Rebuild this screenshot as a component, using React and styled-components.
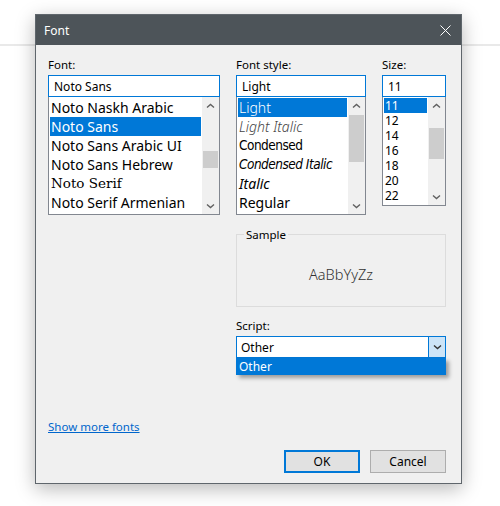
import React from "react";
import styled, { createGlobalStyle } from "styled-components";

const GlobalStyle = createGlobalStyle`
  html, body {
    margin: 0;
    background: #fff;
  }
  body {
    font-family: "Noto Sans", "Open Sans", sans-serif;
  }
`;

const Page = styled.div`
  position: relative;
  width: 500px;
  height: 506px;
  overflow: hidden;
`;

const PageHeader = styled.div`
  height: 44px;
  border-bottom: 2px solid #e9e9e9;
`;

const Dialog = styled.div`
  position: absolute;
  left: 35px;
  top: 14px;
  width: 427px;
  height: 470px;
  box-sizing: border-box;
  border: 1px solid #5f666c;
  background: #f0f0f0;
  box-shadow: 0 5px 18px rgba(0, 0, 0, 0.28);
  display: flex;
  flex-direction: column;
  font-size: 11.5px;
  color: #000;
`;

const TitleBar = styled.div`
  height: 30px;
  flex-shrink: 0;
  background: #4d5459;
  color: #fff;
  display: flex;
  align-items: center;
  justify-content: space-between;
  padding: 0 10px 0 8px;
  font-size: 12px;
`;

const Body = styled.div`
  flex: 1;
  display: flex;
  flex-direction: column;
  padding: 12px 15px 10px 12px;
`;

const Grid = styled.div`
  display: grid;
  grid-template-columns: 172px 130px 64px;
  column-gap: 16px;
  row-gap: 12px;
  align-items: start;
`;

const Field = styled.div`
  display: flex;
  flex-direction: column;
`;

const Label = styled.div`
  line-height: 16px;
  margin-bottom: 2px;
`;

const TextBox = styled.div`
  height: 22px;
  box-sizing: border-box;
  border: 1px solid #0078d7;
  background: #fff;
  padding: 0 5px;
  display: flex;
  align-items: center;
  font-size: 12px;
`;

const ListBox = styled.div`
  height: ${(p) => p.$height}px;
  box-sizing: border-box;
  border: 1px solid #828790;
  border-top: none;
  background: #fff;
  display: flex;
`;

const Items = styled.div`
  flex: 1;
  padding: 1px;
  overflow: hidden;
`;

const Item = styled.div`
  height: ${(p) => p.$row}px;
  line-height: ${(p) => p.$row}px;
  padding-left: 1px;
  white-space: nowrap;
  overflow: hidden;
  font-family: ${(p) => p.$font || '"Noto Sans", sans-serif'};
  font-size: ${(p) => p.$size || 14}px;
  font-weight: ${(p) => p.$weight || 400};
  font-style: ${(p) => (p.$italic ? "italic" : "normal")};
  font-stretch: ${(p) => (p.$narrow ? "condensed" : "normal")};
  letter-spacing: ${(p) => (p.$narrow ? "-0.5px" : "normal")};
  background: ${(p) => (p.$selected ? "#0078d7" : "transparent")};
  color: ${(p) => (p.$selected ? "#fff" : p.$color || "#000")};
`;

const ScrollBar = styled.div`
  width: 17px;
  background: #f0f0f0;
  display: flex;
  flex-direction: column;
`;

const ArrowButton = styled.div`
  height: 17px;
  display: flex;
  align-items: center;
  justify-content: center;
`;

const Track = styled.div`
  flex: 1;
`;

const Thumb = styled.div`
  margin: ${(p) => p.$offset}px 0 0 1px;
  width: 15px;
  height: ${(p) => p.$length}px;
  background: #cdcdcd;
`;

const LowerPanel = styled.div`
  grid-column: 2 / 4;
  display: flex;
  flex-direction: column;
`;

const SampleGroup = styled.fieldset`
  margin: 0;
  padding: 0;
  height: 80px;
  box-sizing: border-box;
  border: 1px solid #dcdcdc;
`;

const Legend = styled.legend`
  margin-left: 7px;
  padding: 0 2px;
  line-height: 15px;
`;

const SampleArea = styled.div`
  height: 62px;
  display: flex;
  align-items: center;
  justify-content: center;
  padding-top: 2px;
  box-sizing: border-box;
`;

const SampleText = styled.div`
  font-size: 14.5px;
  font-weight: 300;
  color: #333;
`;

const ScriptField = styled(Field)`
  margin-top: 11px;
  position: relative;
`;

const Combo = styled.div`
  height: 22px;
  box-sizing: border-box;
  border: 1px solid #0078d7;
  background: #fff;
  display: flex;
  font-size: 12px;
`;

const ComboValue = styled.div`
  flex: 1;
  padding-left: 4px;
  display: flex;
  align-items: center;
`;

const ComboButton = styled.div`
  width: 16px;
  border-left: 1px solid #0078d7;
  background: #cce4f7;
  display: flex;
  align-items: center;
  justify-content: center;
`;

const Popup = styled.div`
  position: absolute;
  left: 0;
  right: 0;
  top: 100%;
  height: 17px;
  background: #0078d7;
  color: #fff;
  padding-left: 3px;
  line-height: 17px;
  font-size: 12px;
  box-shadow: 3px 3px 4px rgba(0, 0, 0, 0.35);
`;

const Footer = styled.div`
  margin-top: auto;
  display: flex;
  flex-direction: column;
`;

const MoreLink = styled.a`
  align-self: flex-start;
  line-height: 16px;
  color: #0066cc;
  text-decoration: underline;
  margin-bottom: 15px;
  cursor: pointer;
`;

const ButtonRow = styled.div`
  display: flex;
  justify-content: flex-end;
  gap: 10px;
`;

const Button = styled.button`
  width: 76px;
  height: 23px;
  box-sizing: border-box;
  font: inherit;
  font-size: 12px;
  color: #000;
  background: #e1e1e1;
  border: ${(p) => (p.$primary ? "2px solid #0078d7" : "1px solid #adadad")};
  padding: 0;
`;

function Chevron({ down, color = "#606060" }) {
  return (
    <svg width="9" height="6" viewBox="0 0 9 6">
      <polyline
        points={down ? "1,1.5 4.5,4.5 8,1.5" : "1,4.5 4.5,1.5 8,4.5"}
        fill="none"
        stroke={color}
        strokeWidth="1.4"
      />
    </svg>
  );
}

function Scroller({ offset, length }) {
  return (
    <ScrollBar>
      <ArrowButton>
        <Chevron />
      </ArrowButton>
      <Track>
        <Thumb $offset={offset} $length={length} />
      </Track>
      <ArrowButton>
        <Chevron down />
      </ArrowButton>
    </ScrollBar>
  );
}

const serif = '"DejaVu Serif", "Liberation Serif", serif';
const condensed = '"DejaVu Sans", sans-serif';

const fonts = [
  { name: "Noto Naskh Arabic" },
  { name: "Noto Sans", selected: true },
  { name: "Noto Sans Arabic UI" },
  { name: "Noto Sans Hebrew" },
  { name: "Noto Serif", font: serif, size: 13.5 },
  { name: "Noto Serif Armenian" },
];

const styles = [
  { name: "Light", weight: 300, selected: true },
  { name: "Light Italic", weight: 300, italic: true, color: "#444" },
  { name: "Condensed", font: condensed, narrow: true, size: 13.5 },
  { name: "Condensed Italic", font: condensed, narrow: true, italic: true, size: 13.5 },
  { name: "Italic", italic: true },
  { name: "Regular" },
];

const sizes = ["11", "12", "14", "16", "18", "20", "22"];

export default function App() {
  return (
    <>
      <GlobalStyle />
      <Page>
        <PageHeader />
        <Dialog>
          <TitleBar>
            <span>Font</span>
            <svg width="11" height="11" viewBox="0 0 11 11">
              <path d="M0.5 0.5 L10.5 10.5 M10.5 0.5 L0.5 10.5" stroke="#fff" strokeWidth="1" />
            </svg>
          </TitleBar>
          <Body>
            <Grid>
              <Field>
                <Label>Font:</Label>
                <TextBox>Noto Sans</TextBox>
                <ListBox $height={118}>
                  <Items>
                    {fonts.map((f) => (
                      <Item
                        key={f.name}
                        $row={19}
                        $font={f.font}
                        $size={f.size}
                        $selected={f.selected}
                      >
                        {f.name}
                      </Item>
                    ))}
                  </Items>
                  <Scroller offset={37} length={17} />
                </ListBox>
              </Field>
              <Field>
                <Label>Font style:</Label>
                <TextBox>Light</TextBox>
                <ListBox $height={118}>
                  <Items>
                    {styles.map((s) => (
                      <Item
                        key={s.name}
                        $row={19}
                        $font={s.font}
                        $size={s.size}
                        $weight={s.weight}
                        $italic={s.italic}
                        $narrow={s.narrow}
                        $color={s.color}
                        $selected={s.selected}
                      >
                        {s.name}
                      </Item>
                    ))}
                  </Items>
                  <Scroller offset={1} length={47} />
                </ListBox>
              </Field>
              <Field>
                <Label>Size:</Label>
                <TextBox>11</TextBox>
                <ListBox $height={109}>
                  <Items>
                    {sizes.map((s, i) => (
                      <Item key={s} $row={15} $size={12} $selected={i === 0}>
                        {s}
                      </Item>
                    ))}
                  </Items>
                  <Scroller offset={14} length={31} />
                </ListBox>
              </Field>
              <LowerPanel>
                <SampleGroup>
                  <Legend>Sample</Legend>
                  <SampleArea>
                    <SampleText>AaBbYyZz</SampleText>
                  </SampleArea>
                </SampleGroup>
                <ScriptField>
                  <Label>Script:</Label>
                  <Combo>
                    <ComboValue>Other</ComboValue>
                    <ComboButton>
                      <Chevron down color="#333" />
                    </ComboButton>
                  </Combo>
                  <Popup>Other</Popup>
                </ScriptField>
              </LowerPanel>
            </Grid>
            <Footer>
              <MoreLink>Show more fonts</MoreLink>
              <ButtonRow>
                <Button $primary>OK</Button>
                <Button>Cancel</Button>
              </ButtonRow>
            </Footer>
          </Body>
        </Dialog>
      </Page>
    </>
  );
}
